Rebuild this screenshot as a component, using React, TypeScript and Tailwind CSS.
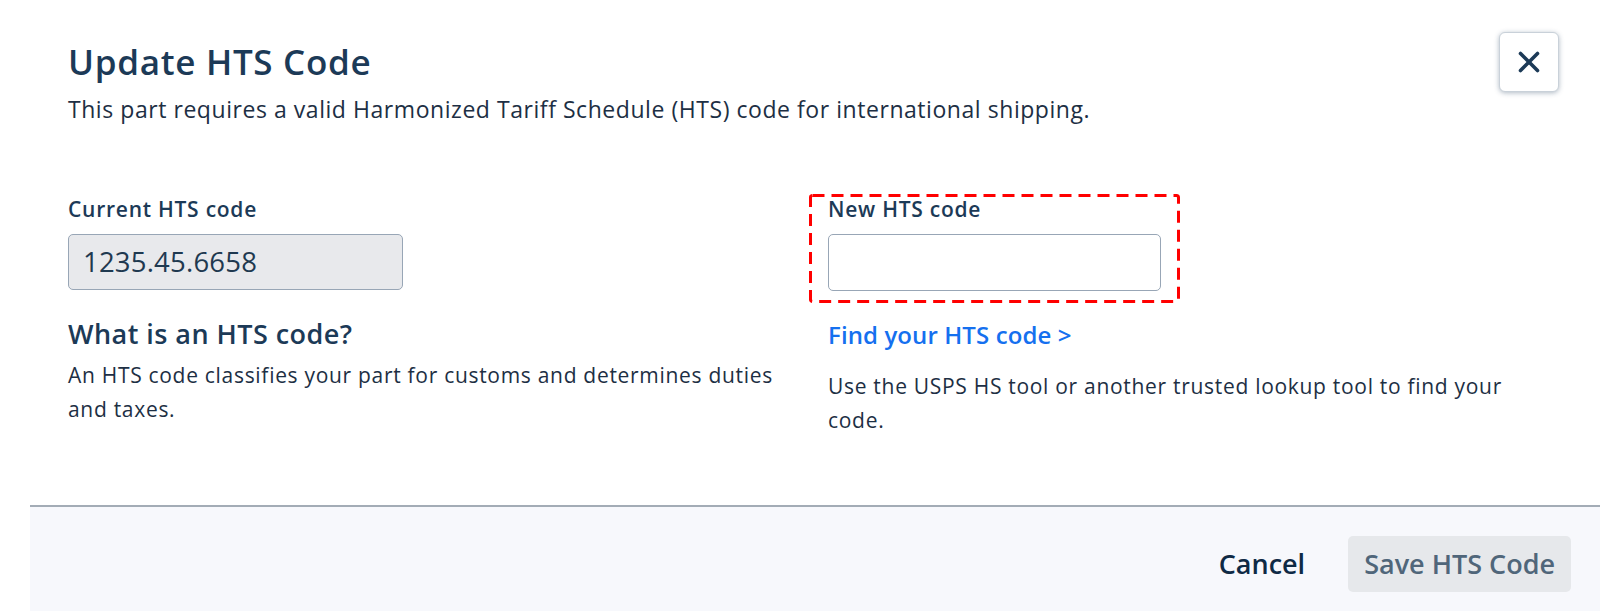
import React from "react";

export default function App() {
  return (
    <div
      className="w-[1600px] h-[615px] bg-white overflow-hidden"
      style={{ fontFamily: '"Open Sans", "Noto Sans", sans-serif' }}
    >
      <div className="ml-[30px] w-[1570px] h-[611px] flex flex-col bg-white">
        {/* Body */}
        <div className="flex-1 pl-[38px] pr-[41px]">
          <div className="flex justify-between items-start">
            <div className="pt-[42px]">
              <h1 className="text-[35px] leading-[40px] tracking-[0.7px] font-semibold text-[#1c3a57]">
                Update HTS Code
              </h1>
              <p className="mt-[13px] text-[23px] leading-[28px] tracking-[0.55px] text-[#1d2f44]">
                This part requires a valid Harmonized Tariff Schedule (HTS) code for international shipping.
              </p>
            </div>
            <button
              type="button"
              aria-label="Close"
              className="mt-[32px] w-[60px] h-[60px] rounded-md border border-[#c9d1d9] bg-white shadow-[0_1px_5px_rgba(30,58,90,0.35)] flex items-center justify-center"
            >
              <svg width="24" height="24" viewBox="0 0 24 24" fill="none">
                <path
                  d="M3.5 3.5L20.5 20.5M20.5 3.5L3.5 20.5"
                  stroke="#1c3a57"
                  strokeWidth="3.6"
                  strokeLinecap="round"
                />
              </svg>
            </button>
          </div>

          <div className="flex mt-[72px]">
            {/* Left column */}
            <div className="w-[760px] shrink-0">
              <label className="block text-[21px] leading-[28px] tracking-[0.75px] font-semibold text-[#1c3a57]">
                Current HTS code
              </label>
              <div className="mt-[11px] w-[335px] h-[56px] rounded-[5px] border border-[#98a6b6] bg-[#e8e9ec] flex items-center pl-[14px]">
                <span className="text-[27.5px] tracking-[0.2px] text-[#1f3950]">1235.45.6658</span>
              </div>
              <h2 className="mt-[28px] text-[27px] leading-[32px] tracking-[0.45px] font-semibold text-[#1c3a57]">
                What is an HTS code?
              </h2>
              <p className="mt-[8px] w-[740px] text-[21px] leading-[34px] tracking-[0.7px] text-[#1d2f44]">
                An HTS code classifies your part for customs and determines duties and taxes.
              </p>
            </div>

            {/* Right column */}
            <div className="w-[700px]">
              <div className="relative w-[333px]">
                <label className="block text-[21px] leading-[28px] tracking-[0.75px] font-semibold text-[#1c3a57]">
                  New HTS code
                </label>
                <input
                  type="text"
                  aria-label="New HTS code"
                  className="mt-[11px] block w-[333px] h-[57px] rounded-[5px] border border-[#98a6b6] bg-white outline-none px-[14px] text-[27px]"
                />
                <svg
                  className="absolute pointer-events-none"
                  style={{ left: -19, top: -1, width: 371, height: 109 }}
                  viewBox="0 0 371 109"
                  fill="none"
                >
                  <rect
                    x="1.5"
                    y="1.5"
                    width="368"
                    height="106"
                    rx="2"
                    stroke="#ff0000"
                    strokeWidth="3"
                    strokeDasharray="12 7"
                  />
                </svg>
              </div>
              <a
                href="#"
                className="block mt-[28px] text-[24px] leading-[32px] tracking-[0.1px] font-semibold text-[#1570ef]"
              >
                Find your HTS code &gt;
              </a>
              <p className="mt-[18px] w-[690px] text-[21px] leading-[34px] tracking-[0.7px] text-[#1d2f44]">
                Use the USPS HS tool or another trusted lookup tool to find your code.
              </p>
            </div>
          </div>
        </div>

        {/* Footer */}
        <div className="h-[106px] shrink-0 border-t-2 border-[#a3acb6] bg-[#f7f8fc] flex items-start justify-end pr-[29px] pt-[29px]">
          <button
            type="button"
            className="h-[56px] mr-[43px] text-[27px] font-semibold text-[#0f2a45]"
          >
            Cancel
          </button>
          <button
            type="button"
            className="h-[56px] px-[16px] rounded-[5px] bg-[#e6e8eb] text-[27px] font-semibold text-[#50667a]"
          >
            Save HTS Code
          </button>
        </div>
      </div>
    </div>
  );
}
